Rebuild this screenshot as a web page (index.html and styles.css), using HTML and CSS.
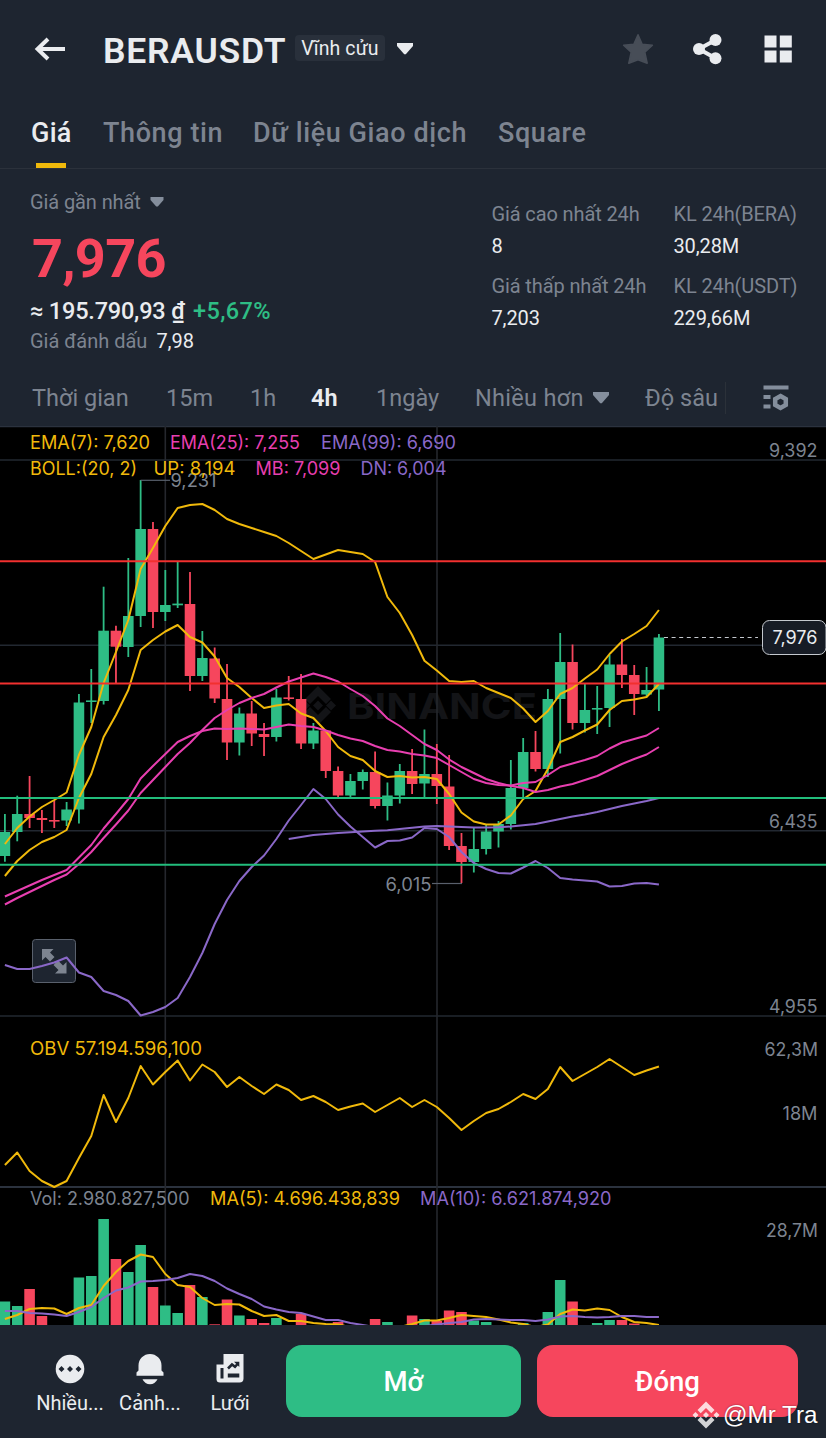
FILE: index.html
```html
<!DOCTYPE html>
<html lang="vi">
<head>
<meta charset="utf-8">
<title>BERAUSDT</title>
<link rel="stylesheet" href="styles.css">
</head>
<body>
<div class="app">
  <header class="header">
    <svg class="back" width="32" height="26" viewBox="0 0 32 26"><path d="M14 3 3.6 13 14 23M4 13H31" fill="none" stroke="#eaecef" stroke-width="4"/></svg>
    <h1 class="symbol">BERAUSDT</h1>
    <span class="badge">Vĩnh cửu</span>
    <svg class="symbol-caret" width="18" height="14" viewBox="0 0 18 14"><path d="M1 1H17V4L9.8 12.2H8.2L1 4Z" fill="#eaecef"/></svg>
    <div class="header-actions">
      <svg width="32" height="32" viewBox="0 0 32 32"><path d="M16 1.8 20.2 11.2 30.4 12.3 22.8 19.2 25.2 30.2 16 26.8 6.8 30.2 9.2 19.2 1.6 12.3 11.8 11.2Z" fill="#474d57" stroke="#474d57" stroke-width="1.5" stroke-linejoin="round"/></svg>
      <svg width="32" height="32" viewBox="0 0 32 32"><path d="M23.500 7 7 16 23.500 25.200" fill="none" stroke="#eaecef" stroke-width="4"/><g fill="#eaecef"><circle cx="23.500" cy="7" r="6"/><circle cx="7" cy="16" r="6"/><circle cx="23.500" cy="25.200" r="6"/></g></svg>
      <svg width="32" height="32" viewBox="0 0 32 32"><path d="M2.500 2.500h12v12h-12zM17.800 2.500h12v12h-12zM2.500 17.500h12v12h-12zM17.800 17.500h12v12h-12z" fill="#eaecef"/></svg>
    </div>
  </header>

  <nav class="tabs">
    <a class="tab tab-active">Giá</a>
    <a class="tab tab-info">Thông tin</a>
    <a class="tab tab-data">Dữ liệu Giao dịch</a>
    <a class="tab tab-square">Square</a>
  </nav>

  <section class="summary">
    <div class="quote">
      <div class="quote-label"><span>Giá gần nhất</span><svg width="14" height="12" viewBox="0 0 14 12"><path d="M.5 1H13.500V4L7.800 10.600H6.200L.5 4Z" fill="#848e9c"/></svg></div>
      <div class="price">7,976</div>
      <div class="fiat"><span class="fiat-value">≈ 195.790,93 ₫</span><span class="change">+5,67%</span></div>
      <div class="mark"><span>Giá đánh dấu</span><span class="mark-value">7,98</span></div>
    </div>
    <dl class="stats">
      <div class="stat"><dt>Giá cao nhất 24h</dt><dd>8</dd></div>
      <div class="stat"><dt>KL 24h(BERA)</dt><dd>30,28M</dd></div>
      <div class="stat"><dt>Giá thấp nhất 24h</dt><dd>7,203</dd></div>
      <div class="stat"><dt>KL 24h(USDT)</dt><dd>229,66M</dd></div>
    </dl>
  </section>

  <nav class="intervals">
    <span>Thời gian</span>
    <span>15m</span>
    <span>1h</span>
    <span class="current">4h</span>
    <span>1ngày</span>
    <span class="more"><span class="more-label">Nhiều hơn</span><svg width="18" height="14" viewBox="0 0 18 14"><path d="M1 1H17V4L9.800 12.200H8.200L1 4Z" fill="#848e9c"/></svg></span>
    <span class="depth">Độ sâu</span>
    <svg class="settings" width="28" height="28" viewBox="0 0 28 28"><path d="M1.500 1.500h25v4h-25zM1.500 11h7v4h-7zM1.500 20.500h7v4h-7z" fill="#848e9c"/><path d="M18.500 12 23.800 15V21L18.500 24 13.200 21V15Z" fill="none" stroke="#848e9c" stroke-width="4.500"/></svg>
  </nav>

  <main class="chart">
    <svg id="chart" width="826" height="899" viewBox="0 426 826 899"></svg>
  </main>

  <footer class="footer">
    <div class="tools">
      <div class="tool"><svg width="32" height="32" viewBox="0 0 32 32"><circle cx="16" cy="16" r="14.300" fill="#eaecef"/><path d="M7.500 13 10.500 16 7.500 19 4.500 16ZM16 13 19 16 16 19 13 16ZM24.500 13 27.500 16 24.500 19 21.500 16Z" fill="#1e2530"/></svg><span>Nhiều...</span></div>
      <div class="tool"><svg width="32" height="32" viewBox="0 0 32 32"><path d="M2.500 22.800V19.500L4.500 17.500V12.500a11.500 11.500 0 0 1 23 0v5l2 2v3.300ZM8.500 26.200h15q-2.500 5-7.500 5T8.500 26.200Z" fill="#eaecef"/></svg><span>Cảnh...</span></div>
      <div class="tool"><svg width="32" height="32" viewBox="0 0 32 32"><path d="M9.500 1H29.500V25.500Q29.500 29.500 25.500 29.500H6Q2.500 29.500 2.500 26V11.500H9.500Z" fill="#eaecef"/><path d="M6.500 15h3v10.500h-3zM13.800 20.500h11.500v4H13.800z" fill="#1e2530"/><path d="M14 15.500 18 11.500 21 13.800 24 10.500" fill="none" stroke="#1e2530" stroke-width="2.600"/><path d="M20 8.700H25.300V14Z" fill="#1e2530"/></svg><span>Lưới</span></div>
    </div>
    <button class="btn btn-open">Mở</button>
    <button class="btn btn-close">Đóng</button>
  </footer>

  <div class="watermark">
    <svg width="28" height="28" viewBox="0 0 28 28"><path d="M14 .5 22.500 9 19.300 12.200 14 6.900 8.700 12.200 5.500 9ZM3.500 11 6.500 14 3.500 17 .5 14ZM24.500 11 27.500 14 24.500 17 21.500 14ZM14 11 17 14 14 17 11 14ZM8.700 15.800 14 21.100 19.300 15.800 22.500 19 14 27.500 5.500 19Z" fill="#fff" fill-opacity=".8"/></svg>
    <span>@Mr Tra</span>
  </div>
</div>
<script src="chart.js"></script>
</body>
</html>
```
FILE: styles.css
```css
* { box-sizing: border-box; }
body {
  margin: 0;
  background: #1e2530;
  font-family: Roboto, "Noto Sans", sans-serif;
  color: #eaecef;
}
.app {
  position: relative;
  display: flex;
  flex-direction: column;
  width: 826px;
  height: 1438px;
  overflow: hidden;
  white-space: nowrap;
}
.header {
  display: flex;
  align-items: center;
  height: 97px;
  padding: 0 32px 0 34px;
}
.symbol {
  width: 191px;
  margin: 5px 0 0 37px;
  font-size: 35.500px;
  line-height: 42px;
  font-weight: 600;
  letter-spacing: 0.75px;
}
.badge {
  width: 90px;
  height: 26px;
  border-radius: 4px;
  background: #29303b;
  font-size: 19.500px;
  line-height: 28px;
  text-align: center;
  letter-spacing: 0.1px;
  margin-left: 1px;
  margin-top: -1px;
}
.symbol-caret { margin-left: 11px; }
.header-actions { display: flex; gap: 38px; margin-left: auto; }
.tabs {
  display: flex;
  height: 72px;
  border-bottom: 1px solid #2b313b;
  padding: 17px 0 0 31px;
  font-size: 27px;
  line-height: 38px;
  font-weight: 500;
  color: #7d8490;
}
.tab { letter-spacing: 0.6px; }
.tab-active { position: relative; width: 72px; color: #eaecef; letter-spacing: 0.3px; }
.tab-active::after {
  content: "";
  position: absolute;
  left: 5px;
  bottom: 0;
  width: 30px;
  height: 5px;
  background: #f0b90b;
}
.tab-info { width: 150px; }
.tab-data { width: 245px; }
.summary {
  display: flex;
  height: 200px;
  padding: 0 0 0 30px;
  font-size: 20px;
  color: #7d8490;
}
.quote { width: 461.500px; padding-top: 21px; }
.quote-label { display: flex; align-items: center; gap: 9px; line-height: 24px; letter-spacing: -0.1px; }
.price {
  font-size: 54px;
  line-height: 64px;
  margin: 13px 0 0 2px;
  font-weight: 700;
  letter-spacing: -0.7px;
  color: #f6465d;
}
.fiat {
  display: flex;
  gap: 9px;
  margin-top: 6px;
  font-size: 23.500px;
  line-height: 28px;
  font-weight: 500;
  color: #eaecef;
}
.fiat-value { width: 154px; letter-spacing: -0.2px; }
.change { color: #2ebd85; letter-spacing: 0.4px; }
.mark { display: flex; gap: 9px; margin-top: 4px; line-height: 24px; }
.mark-value { color: #eaecef; }
.stats {
  display: grid;
  grid-template-columns: 182px 140px;
  grid-auto-rows: 72px;
  margin: 0;
  padding-top: 29px;
  letter-spacing: -0.12px;
}
.stat dt, .stat dd { margin: 0; line-height: 32px; }
.stat dd { color: #eaecef; }
.intervals {
  display: flex;
  align-items: center;
  height: 57px;
  padding: 1px 0 0 32px;
  font-size: 23.500px;
  line-height: 32px;
  color: #7d8490;
}
.intervals > span:nth-child(1) { width: 134px; }
.intervals > span:nth-child(2) { width: 84px; }
.intervals > span:nth-child(3) { width: 61px; }
.intervals > span:nth-child(4) { width: 65px; }
.intervals > span:nth-child(5) { width: 99px; }
.intervals .current { color: #eaecef; font-weight: 600; }
.intervals .more { display: flex; align-items: center; width: 170px; gap: 8px; }
.more-label { letter-spacing: 0.3px; }
.intervals .depth { width: 81px; border-right: 1px solid #2b3139; }
.settings { margin-left: 36px; margin-top: -1px; }
.chart { height: 899px; background: #000; font-family: Inter, sans-serif; }
.chart svg { display: block; }
.footer {
  display: flex;
  height: 113px;
  padding: 20px 28px 0 30px;
}
.tools { display: flex; width: 256px; }
.tool {
  display: flex;
  flex-direction: column;
  align-items: center;
  width: 80px;
  padding-top: 8px;
  font-size: 20px;
  line-height: 24px;
}
.tool span { margin-top: 6px; }
.btn {
  height: 72px;
  border: 0;
  border-radius: 16px;
  padding: 1px 0 0;
  font: 500 27.500px Roboto, "Noto Sans", sans-serif;
  color: #fff;
}
.btn-open { width: 235px; background: #2ebd85; }
.btn-close { width: 261px; margin-left: 16px; background: #f6465d; }
.watermark {
  position: absolute;
  left: 692px;
  top: 1400px;
  display: flex;
  align-items: center;
  gap: 3px;
  font: 24.200px/30px "Liberation Sans", Arial, sans-serif;
  color: #fff;
  text-shadow: 0 0 2px rgba(0, 0, 0, 0.5);
}
```
FILE: chart.js
```js
const svg = document.getElementById('chart');
const X = i => 4.9 + 12.34 * i;
const GREEN = '#2ebd85', RED = '#f6465d', YELLOW = '#f0b90b', PINK = '#e83fb0', PURPLE = '#8a68c8', GRAY = '#7d8490';

function add(name, attrs, text) {
  const el = document.createElementNS('http://www.w3.org/2000/svg', name);
  for (const k in attrs) el.setAttribute(k, attrs[k]);
  if (text) el.textContent = text;
  svg.appendChild(el);
  return el;
}
function rule(x1, y1, x2, y2, color, width) {
  add('line', { x1, y1, x2, y2, stroke: color, 'stroke-width': width });
}
function curve(points, color, start = 0) {
  add('polyline', {
    points: points.map((y, i) => X(i + start) + ',' + y).join(' '),
    fill: 'none', stroke: color, 'stroke-width': 2, 'stroke-linejoin': 'round'
  });
}
function label(text, x, y, width, color, size = 18) {
  add('text', { x, y, fill: color, 'font-size': size, textLength: width, lengthAdjust: 'spacingAndGlyphs' }, text);
}

// Candles: wick top, body top, body bottom, wick bottom, rising
const candles = [
  [814,832,856,861.7,1],[795.7,814,832,841.3,1],[776,814,818,828,0],[810,818,820,833,0],[800,820,821.6,828,0],[802,809.5,820.5,826,1],
  [694,702.5,809.5,823.5,1],[669,700.4,702,723,1],[586.7,630.7,701,704.5,1],[625.7,630.7,646.7,683,0],[558,616,647,657,1],[480,529,616,627,1],
  [522,529,612,628,0],[570,605,612,621,1],[561,603.6,605.3,608,1],[572,604,676,691,0],[631,658,676,681,1],[647.5,658.5,698.5,703,0],
  [664,699,742.5,760,0],[707.5,713.5,742.5,755.5,1],[701,713.5,733.5,746,0],[723,734,737,756,0],[689,697.5,737,741.5,1],[676,697.4,699,700.5,0],
  [674,699,743.5,749,0],[723,730.5,743.5,749,1],[730.5,730.5,771,778,0],[766.5,771,795.5,797.5,0],[774,781,795.5,799,1],[769.5,772,781,789.5,1],
  [751.5,772,806,808.5,0],[782.5,795.5,806,820.5,1],[764,771,795.5,803.5,1],[749,771,784,794,0],[729.5,774,783.5,797,1],[744,774,786,804,0],
  [755,786.5,846,850,0],[833,846,862,883,0],[827.5,849,862,872.5,1],[824,831.5,849,854.5,1],[821,824,831.5,847.5,1],[760,788,824,829.5,1],
  [738,752,788,800,1],[731,752,769,771.5,0],[689,699,769,777,1],[633,662,699,753.5,1],[644.5,662,723,729.5,0],[683.5,710,723,732.5,1],
  [686,708,709.6,734,1],[655,664.5,708,727,1],[639,664.5,675,688,0],[665,675,694,715,0],[667,690,694.5,697,1],[634,637.5,689.5,711,1]
];
const bollUp = [844,828,816.5,807,800,792.5,755,727,683,652,620,569,548,526,508,505,504,510,519,524,528,532,536,543,551,559,554.5,550,552,554,562,597,613,635,660.7,670.5,681,682,681,688,693,698,708.5,722,711,694,688,678.5,669.5,654,641.5,634,626,610];
const ema7 = [876,861,850,842,837,830,798,774,737,715,690,650,640,631.5,625,637,642.5,656.5,678,687,698,708,705.5,704,713.5,718,731,747,756,760,771,777,776,777.5,777,779,794,812.5,821.5,824.5,824.5,815.5,799,791,769,742,737,730.5,724.5,710,701,699.5,697,684];
const ema25 = [896.5,891,885.5,880,875,870,857.5,845,828.5,814,799,778.5,766,754,742,736,731,728.5,729,728.5,729,729.5,727,724.5,726,727,730.5,735,738.5,741,746,750,751.5,754,755.5,758,765,772,779,783,785,785.5,783,782,775,767,763.5,760,756,748.5,742.5,739,735.5,728];
const bollMid = [904.5,898,892,886,880,874.5,864,852,838,824.5,810.5,793,780,767,754,743,730,718,710,703,698,694,687.5,681.5,677.5,673.5,677,681.5,689,696,706,718.5,726,735,744,750,759.5,767,773,779,783,786,788,792,790,786.5,784,780,776,770,764,759,754.5,747];
const ema99 = [839,837,835,834,833,832.2,831.5,830.8,830.2,829,827.8,826.5,826,826.5,827,827.5,827.5,827.2,826.5,825.2,824,821.5,819,816.6,814.5,812,809,806,803.5,801,798];
const bollDown = [965,969,969,966,962.5,957.5,972.5,977,991,995,1001,1015.5,1012,1007,998,977,953,924,900,881,867,855.5,839,820.5,805,789,799,814.5,826.5,837,847.5,841,840.5,837.5,828,829,837,852,863,869,873,873.5,867.5,861,868,878,879.5,880.5,881.5,886.5,886,883.5,883,884.5];
const obv = [1165,1152.5,1171,1181,1187,1181,1158,1136,1095,1122,1098,1066,1084.5,1072,1060.5,1080.5,1064.5,1072,1087,1077,1086,1094,1084.5,1090,1100,1096,1102,1110,1106.5,1103.5,1112,1105,1098,1107,1100,1107,1118,1130,1121,1113,1109,1102,1094,1099,1089,1067,1081,1074,1067,1059,1067,1075,1070.5,1066.5];
const volMa5 = [1319,1315,1309,1308,1308.5,1314,1308,1305,1286,1272,1261,1254.5,1257,1274,1285,1287,1298,1305,1304,1304.5,1311,1316,1315,1321,1321,1323,1324,1324.5,1327,1328,1328,1328,1327,1324,1320.5,1320.5,1318,1315,1316,1317,1319.5,1322.5,1324,1327,1324.5,1314,1309.5,1310.5,1308.5,1310,1317,1322,1323,1325];
const volMa10 = [1311,1311,1313,1313.5,1314.5,1316,1312,1307,1298,1290.5,1287.5,1281.5,1281,1280,1278,1274,1276,1281,1288.5,1294,1299,1306.5,1309.5,1312,1313,1316.5,1320,1320,1323,1325,1327,1327,1327,1327,1326,1324.5,1323,1322,1319.5,1319,1319.5,1320,1320,1321,1319.5,1316.5,1316,1317,1317.5,1317,1316,1316,1317,1317];
// Volume bars: candle index, top, rising
const volumes = [[0,1301.5,1],[1,1306,1],[2,1289,0],[3,1316,0],[6,1277.5,1],[7,1276,1],[8,1219,1],[9,1259,0],[10,1272,1],[11,1245,1],[12,1287,0],[13,1305.5,1],[14,1313,1],[15,1285,0],[16,1297,1],[17,1324.3,0],[18,1299.5,0],[19,1315.5,1],[20,1319,0],[21,1323,0],[22,1318,1],[24,1314,0],[27,1322,0],[30,1319,0],[31,1322,1],[33,1315.5,0],[34,1319,1],[35,1321,0],[36,1310.5,0],[37,1312,0],[38,1320.5,1],[39,1322,1],[42,1323,1],[44,1312,1],[45,1280,1],[46,1301.5,0],[48,1323,1],[49,1320,1],[50,1320,0],[51,1323.5,0]];

// Watermark
add('path', { d: 'M318 686 331 699 326 704 318 696 310 704 305 699ZM305 700.500 310 705.500 305 710.500 300 705.500ZM331 700.500 336 705.500 331 710.500 326 705.500ZM318 700.500 323 705.500 318 710.500 313 705.500ZM310 707 318 715 326 707 331 712 318 725 305 712Z', fill: '#131417' });
add('text', { x: 347, y: 718.5, fill: '#131417', 'font-size': 35, 'font-weight': 700, textLength: 190, lengthAdjust: 'spacingAndGlyphs' }, 'BINANCE');

// Grid
rule(0, 426.5, 826, 426.5, '#2b323e', 1.6);
[460, 645.3, 830.7, 1016].forEach(y => rule(0, y, 826, y, '#222831', 1.4));
rule(0, 1187, 826, 1187, '#2b323e', 2);
[165.3, 437].forEach(x => rule(x, 426, x, 1325, '#25272d', 1.6));

candles.forEach(([high, top, bottom, low, up], i) => {
  const color = up ? GREEN : RED;
  rule(X(i), high, X(i), low, color, 1.8);
  add('rect', { x: X(i) - 5.3, y: top, width: 10.6, height: bottom - top, fill: color });
});
volumes.forEach(([i, top, up]) => add('rect', { x: X(i) - 5.3, y: top, width: 10.6, height: 1325 - top, fill: up ? GREEN : RED }));

// Fullscreen button
add('rect', { x: 32.5, y: 939.5, width: 43, height: 43, rx: 3, fill: '#1e2530', stroke: '#59606c' });
add('path', { d: 'M42 949H53.500L50 952.500 54.500 957 50 961.500 45.500 957 42 960.500ZM66.500 973.500H55L58.500 970 53.500 965 58 960.500 63 965.500 66.500 962Z', fill: '#7d8490' });

curve(bollUp, YELLOW);
curve(ema7, YELLOW);
curve(ema25, PINK);
curve(bollMid, PINK);
curve(ema99, PURPLE, 23);
curve(bollDown, PURPLE);
curve(obv, YELLOW);
curve(volMa5, YELLOW);
curve(volMa10, PURPLE);

[561.3, 683.4].forEach(y => rule(0, y, 826, y, '#f2302f', 2));
[798, 864.8].forEach(y => rule(0, y, 826, y, '#22bd7c', 2));

// Extremes and current price
rule(140.6, 480.3, 170, 480.3, '#59606c', 1.2);
rule(432, 883.5, 462, 883.5, '#59606c', 1.2);
label('9,231', 170.5, 487.2, 46, GRAY);
label('6,015', 385.5, 890.5, 46, GRAY);
add('line', { x1: 664, y1: 637.5, x2: 758, y2: 637.5, stroke: '#c4c8ce', 'stroke-width': 1, 'stroke-dasharray': '4 3.6' });
add('rect', { x: 762.5, y: 620.5, width: 63.5, height: 34, rx: 7, fill: '#171c25', stroke: '#c4c8ce' });
label('7,976', 772.5, 644.2, 45, '#eaecef');

// Indicator legends
label('EMA(7): 7,620', 30, 449.3, 120, YELLOW);
label('EMA(25): 7,255', 170, 449.3, 130, PINK);
label('EMA(99): 6,690', 321, 449.3, 135, PURPLE);
label('BOLL:(20, 2)', 30, 475.3, 107, YELLOW);
label('UP: 8,194', 153.5, 475.3, 82, YELLOW);
label('MB: 7,099', 255.5, 475.3, 85, PINK);
label('DN: 6,004', 360.5, 475.3, 86, PURPLE);
label('OBV 57.194.596,100', 30, 1055.3, 172, YELLOW);
label('Vol: 2.980.827,500', 30, 1205.2, 159.5, GRAY);
label('MA(5): 4.696.438,839', 210, 1205.2, 190, YELLOW);
label('MA(10): 6.621.874,920', 420, 1205.2, 191.5, PURPLE);

// Axis values
label('9,392', 769, 456.8, 48.5, GRAY);
label('6,435', 769, 827.5, 48.5, GRAY);
label('4,955', 769, 1012.5, 48.5, GRAY);
label('62,3M', 764.5, 1055.5, 53.5, GRAY);
label('18M', 782.5, 1119.5, 35, GRAY);
label('28,7M', 766, 1237.3, 52, GRAY);
```
